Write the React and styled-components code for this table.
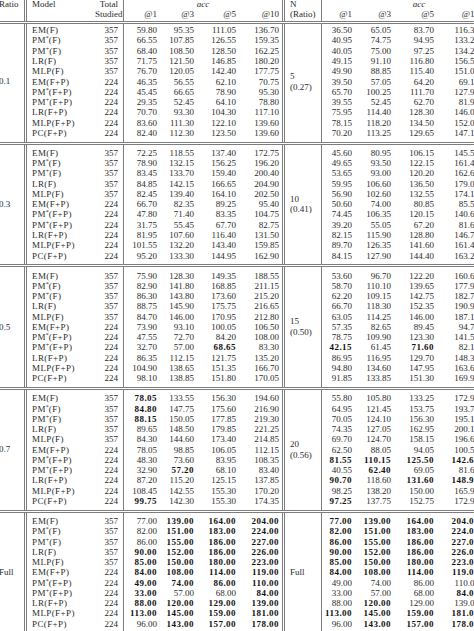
import React from 'react';
import styled, { createGlobalStyle } from 'styled-components';

const LINE = '#7d7d7d';
const ROW_H = 10.27;

const GlobalStyle = createGlobalStyle`
  html, body {
    margin: 0;
    padding: 0;
    background: #ffffff;
    overflow: hidden;
  }
`;

const Table = styled.div`
  width: 483px;
  margin-left: -1px;
  font-family: 'Liberation Serif', 'Times New Roman', serif;
  font-size: 9px;
  color: #2a2a2a;
`;

const Header = styled.div`
  display: flex;
  border-bottom: 3px double ${LINE};
`;

const Block = styled.div`
  display: flex;
  border-top: ${p => (p.$first ? 'none' : `3px double ${LINE}`)};
`;

const Col = styled.div`
  flex: none;
  box-sizing: border-box;
  width: ${p => p.$w}px;
  padding: ${p => p.$pt || 0}px ${p => p.$pr || 0}px ${p => p.$pb ?? 3.4}px ${p => p.$pl || 0}px;
  border-right: ${p =>
    p.$line === 'double' ? `3px double ${LINE}` : p.$line === 'single' ? `1px solid ${LINE}` : 'none'};
  text-align: ${p => p.$align || 'left'};
  display: flex;
  flex-direction: column;
  justify-content: ${p => (p.$center ? 'center' : 'flex-start')};
`;

const Cell = styled.div`
  height: ${ROW_H}px;
  line-height: ${ROW_H}px;
  white-space: nowrap;
  font-weight: ${p => (p.$bold ? 700 : 400)};
  letter-spacing: ${p => (p.$bold ? '0.45px' : p.$model ? '0.4px' : '0')};
  color: ${p => (p.$bold ? '#111' : '#2a2a2a')};
`;

const Stack = styled.div`
  line-height: 10.6px;
  white-space: nowrap;
`;

const HeadLine = styled.div`
  height: 9.6px;
  line-height: 9.6px;
  white-space: nowrap;
  font-style: ${p => (p.$italic ? 'italic' : 'normal')};
  padding-left: ${p => p.$pl || 0}px;
  text-align: ${p => p.$align || 'inherit'};
`;

const LabelRow = styled.div`
  display: flex;
`;

const Label = styled.div`
  flex: none;
  box-sizing: border-box;
  width: ${p => p.$w}px;
  height: 9.6px;
  line-height: 9.6px;
  padding-right: 3px;
  text-align: right;
`;

const Sup = styled.span`
  font-size: 6px;
  vertical-align: 3px;
  line-height: 0;
  letter-spacing: 0;
`;

const LEFT_W = [36, 37, 42, 46];
const RIGHT_W = [33, 39, 43, 45];

const MODELS = [
  ['EM', '', '(F)'],
  ['PM', '*', '(F)'],
  ['PM', '+', '(F)'],
  ['LR', '', '(F)'],
  ['MLP', '', '(F)'],
  ['EM', '', '(F+P)'],
  ['PM', '*', '(F+P)'],
  ['PM', '+', '(F+P)'],
  ['LR', '', '(F+P)'],
  ['MLP', '', '(F+P)'],
  ['PC', '', '(F+P)'],
];

// values starting with * are bold in the paper
const SECTIONS = [
  {
    ratio: '0.1',
    n: ['5', '(0.27)'],
    rows: [
      ['59.80', '95.35', '111.05', '136.70', '36.50', '65.05', '83.70', '116.30'],
      ['66.55', '107.85', '126.55', '159.35', '40.95', '74.75', '94.95', '133.20'],
      ['68.40', '108.50', '128.50', '162.25', '40.05', '75.00', '97.25', '134.20'],
      ['71.75', '121.50', '146.85', '180.20', '49.15', '91.10', '116.80', '156.55'],
      ['76.70', '120.05', '142.40', '177.75', '49.90', '88.85', '115.40', '151.05'],
      ['46.35', '56.55', '62.10', '70.75', '39.50', '57.05', '64.20', '69.10'],
      ['45.45', '66.65', '78.90', '95.30', '65.70', '100.25', '111.70', '127.95'],
      ['29.35', '52.45', '64.10', '78.80', '39.55', '52.45', '62.70', '81.95'],
      ['70.70', '93.30', '104.30', '117.10', '75.95', '114.40', '128.30', '146.05'],
      ['83.60', '111.30', '122.10', '139.60', '78.15', '118.20', '134.50', '152.00'],
      ['82.40', '112.30', '123.50', '139.60', '70.20', '113.25', '129.65', '147.10'],
    ],
  },
  {
    ratio: '0.3',
    n: ['10', '(0.41)'],
    rows: [
      ['72.25', '118.55', '137.40', '172.75', '45.60', '80.95', '106.15', '145.50'],
      ['78.90', '132.15', '156.25', '196.20', '49.65', '93.50', '122.15', '161.40'],
      ['83.45', '133.70', '159.40', '200.40', '53.65', '93.00', '120.20', '162.60'],
      ['84.85', '142.15', '166.65', '204.90', '59.95', '106.60', '136.50', '179.05'],
      ['82.45', '139.40', '164.10', '202.50', '56.90', '102.60', '132.55', '174.10'],
      ['66.70', '82.35', '89.25', '95.40', '50.60', '74.00', '80.85', '85.50'],
      ['47.80', '71.40', '83.35', '104.75', '74.45', '106.35', '120.15', '140.65'],
      ['31.75', '55.45', '67.70', '82.75', '39.20', '55.05', '67.20', '81.65'],
      ['81.95', '107.60', '116.40', '131.50', '82.15', '115.90', '128.80', '146.70'],
      ['101.55', '132.20', '143.40', '159.85', '89.70', '126.35', '141.60', '161.45'],
      ['95.20', '133.30', '144.95', '162.90', '84.15', '127.90', '144.40', '163.25'],
    ],
  },
  {
    ratio: '0.5',
    n: ['15', '(0.50)'],
    rows: [
      ['75.90', '128.30', '149.35', '188.55', '53.60', '96.70', '122.20', '160.65'],
      ['82.90', '141.80', '168.85', '211.15', '58.70', '110.10', '139.65', '177.95'],
      ['86.30', '143.80', '173.60', '215.20', '62.20', '109.15', '142.75', '182.70'],
      ['88.75', '145.90', '175.75', '216.65', '66.70', '118.30', '152.35', '190.90'],
      ['84.70', '146.00', '170.95', '212.80', '63.05', '114.25', '146.00', '187.10'],
      ['73.90', '93.10', '100.05', '106.50', '57.35', '82.65', '89.45', '94.75'],
      ['47.55', '72.70', '84.20', '108.00', '78.75', '109.90', '123.30', '141.50'],
      ['32.70', '57.00', '*68.65', '83.30', '*42.15', '61.45', '*71.60', '82.15'],
      ['86.35', '112.15', '121.75', '135.20', '86.95', '116.95', '129.70', '148.35'],
      ['104.90', '138.65', '151.35', '166.70', '94.80', '134.60', '147.95', '163.60'],
      ['98.10', '138.85', '151.80', '170.05', '91.85', '133.85', '151.30', '169.95'],
    ],
  },
  {
    ratio: '0.7',
    n: ['20', '(0.56)'],
    rows: [
      ['*78.05', '133.55', '156.30', '194.60', '55.80', '105.80', '133.25', '172.90'],
      ['*84.80', '147.75', '175.60', '216.90', '64.95', '121.45', '153.75', '193.75'],
      ['*88.15', '150.05', '177.85', '219.30', '70.05', '124.10', '156.30', '195.10'],
      ['89.65', '148.50', '179.85', '221.25', '74.35', '127.05', '162.95', '200.15'],
      ['84.30', '144.60', '173.40', '214.85', '69.70', '124.70', '158.15', '196.60'],
      ['78.05', '98.85', '106.05', '112.15', '62.50', '88.05', '94.05', '100.55'],
      ['48.30', '73.60', '83.95', '108.35', '*81.55', '*110.15', '*125.50', '*142.60'],
      ['32.90', '*57.20', '68.10', '83.40', '40.55', '*62.40', '69.05', '81.65'],
      ['87.20', '115.20', '125.15', '137.85', '*90.70', '118.60', '*131.60', '*148.90'],
      ['108.45', '142.55', '155.30', '170.20', '98.25', '138.20', '150.00', '165.90'],
      ['*99.75', '142.30', '155.30', '174.35', '*97.25', '137.75', '152.75', '172.95'],
    ],
  },
  {
    ratio: 'Full',
    n: ['Full'],
    rows: [
      ['77.00', '*139.00', '*164.00', '*204.00', '*77.00', '*139.00', '*164.00', '*204.00'],
      ['82.00', '*151.00', '*183.00', '*224.00', '*82.00', '*151.00', '*183.00', '*224.00'],
      ['86.00', '*155.00', '*186.00', '*227.00', '*86.00', '*155.00', '*186.00', '*227.00'],
      ['*90.00', '*152.00', '*186.00', '*226.00', '*90.00', '*152.00', '*186.00', '*226.00'],
      ['*85.00', '*150.00', '*180.00', '*223.00', '*85.00', '*150.00', '*180.00', '*223.00'],
      ['*84.00', '*108.00', '*114.00', '*119.00', '*84.00', '*108.00', '*114.00', '*119.00'],
      ['*49.00', '*74.00', '*86.00', '*110.00', '49.00', '74.00', '86.00', '110.00'],
      ['*33.00', '57.00', '68.00', '*84.00', '33.00', '57.00', '68.00', '*84.00'],
      ['*88.00', '*120.00', '*129.00', '*139.00', '88.00', '*120.00', '129.00', '139.00'],
      ['*113.00', '*145.00', '*159.00', '*181.00', '*113.00', '*145.00', '*159.00', '*181.00'],
      ['96.00', '*143.00', '*157.00', '*178.00', '96.00', '*143.00', '*157.00', '*178.00'],
    ],
  },
];

const Value = ({ v }) => {
  const bold = v.startsWith('*');
  return <Cell $bold={bold}>{bold ? v.slice(1) : v}</Cell>;
};

const ValueCols = ({ rows, offset, widths, lastLine, pt }) =>
  widths.map((w, c) => (
    <Col
      key={c}
      $w={w}
      $pt={pt}
      $pr={3}
      $align="right"
      $line={c === widths.length - 1 ? lastLine : undefined}
    >
      {rows.map((r, i) => (
        <Value key={i} v={r[offset + c]} />
      ))}
    </Col>
  ));

const Section = ({ data, first }) => {
  const pt = first ? 1 : 3.4;
  return (
    <Block $first={first}>
      <Col $w={28} $pt={pt} $line="double" $center>
        <Stack>{data.ratio}</Stack>
      </Col>
      <Col $w={68} $pt={pt} $pl={5}>
        {MODELS.map(([base, sup, rest], i) => (
          <Cell key={i} $model>
            {base}
            {sup && <Sup>{sup}</Sup>}
            {rest}
          </Cell>
        ))}
      </Col>
      <Col $w={29} $pt={pt} $pr={5} $align="right" $line="single">
        {MODELS.map((m, i) => (
          <Cell key={i}>{i < 5 ? 357 : 224}</Cell>
        ))}
      </Col>
      <ValueCols rows={data.rows} offset={0} widths={LEFT_W} lastLine="double" pt={pt} />
      <Col $w={37} $pt={pt} $pl={5} $line="single" $center>
        <Stack>
          {data.n.map(t => (
            <div key={t}>{t}</div>
          ))}
        </Stack>
      </Col>
      <ValueCols rows={data.rows} offset={4} widths={RIGHT_W} pt={pt} />
    </Block>
  );
};

const App = () => (
  <>
    <GlobalStyle />
    <Table>
      <Header>
        <Col $w={28} $pb={2} $line="double">
          <HeadLine>Ratio</HeadLine>
        </Col>
        <Col $w={68} $pb={2} $pl={5}>
          <HeadLine>Model</HeadLine>
        </Col>
        <Col $w={29} $pb={2} $pr={5} $align="right" $line="single">
          <HeadLine>Total</HeadLine>
          <HeadLine>Studied</HeadLine>
        </Col>
        <Col $w={161} $pb={2} $line="double">
          <HeadLine $italic $align="center">acc</HeadLine>
          <LabelRow>
            {['@1', '@3', '@5', '@10'].map((t, i) => (
              <Label key={t} $w={[36, 37, 42, 43][i]}>{t}</Label>
            ))}
          </LabelRow>
        </Col>
        <Col $w={37} $pb={2} $pl={5} $line="single">
          <HeadLine>N</HeadLine>
          <HeadLine>(Ratio)</HeadLine>
        </Col>
        <Col $w={160} $pb={2}>
          <HeadLine $italic $align="center" $pl={34}>acc</HeadLine>
          <LabelRow>
            {['@1', '@3', '@5', '@10'].map((t, i) => (
              <Label key={t} $w={RIGHT_W[i]}>{t}</Label>
            ))}
          </LabelRow>
        </Col>
      </Header>
      {SECTIONS.map((s, i) => (
        <Section key={s.ratio} data={s} first={i === 0} />
      ))}
    </Table>
  </>
);

export default App;
